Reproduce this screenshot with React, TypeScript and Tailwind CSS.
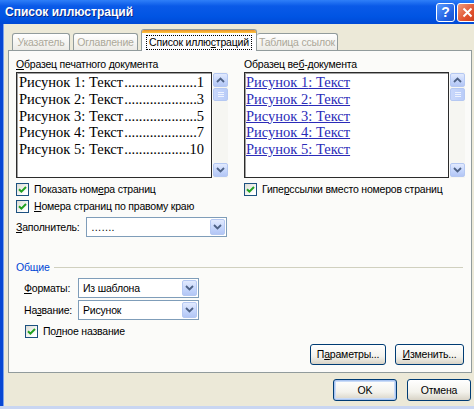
import React from 'react';

const ui = "font-['Liberation_Sans',Arial,sans-serif] text-[10.5px] leading-[13px] tracking-[-0.2px]";

function Check() {
  return (
    <span className="flex h-[13px] w-[13px] shrink-0 items-center justify-center border border-[#1C5180] bg-[linear-gradient(135deg,#dcdcd4,#ffffff_80%)]">
      <svg width="9" height="9" viewBox="0 0 9 9">
        <path d="M1 4.2 L3.4 6.6 L8 2" stroke="#21A121" strokeWidth="2" fill="none" />
      </svg>
    </span>
  );
}

function Arrow({ up }: { up?: boolean }) {
  return (
    <svg width="9" height="6" viewBox="0 0 9 6">
      <path d={up ? 'M1 5 L4.5 1.5 L8 5' : 'M1 1 L4.5 4.5 L8 1'} stroke="#4D6185" strokeWidth="1.8" fill="none" />
    </svg>
  );
}

function ArrowButton({ up, className = '' }: { up?: boolean; className?: string }) {
  return (
    <span
      className={`flex shrink-0 items-center justify-center rounded-[2px] border border-[#B5C8F2] bg-[linear-gradient(180deg,#e2eafe,#c3d4fb_60%,#b3c6f5)] ${className}`}
    >
      <Arrow up={up} />
    </span>
  );
}

function Scrollbar() {
  return (
    <div className="flex h-[106px] w-[15px] flex-col bg-[#F6F6F2] py-[1px]">
      <ArrowButton up className="h-[14px] w-[15px]" />
      <span className="mt-px flex h-[13px] w-[15px] flex-col items-center justify-center gap-[1px] rounded-[2px] border border-[#B5C8F2] bg-[linear-gradient(90deg,#c9d8fc,#b9ccf8)]">
        <span className="h-px w-[6px] bg-[#eef3ff]" />
        <span className="h-px w-[6px] bg-[#eef3ff]" />
        <span className="h-px w-[6px] bg-[#eef3ff]" />
      </span>
      <span className="flex-1" />
      <ArrowButton className="h-[14px] w-[15px]" />
    </div>
  );
}

function Combo({ value, className }: { value: string; className: string }) {
  return (
    <div className={`flex h-[20px] border border-[#7F9DB9] bg-white p-px ${className}`}>
      <span className="flex-1 whitespace-nowrap pl-[3px] leading-[16px]">{value}</span>
      <ArrowButton className="h-[16px] w-[15px]" />
    </div>
  );
}

function XpButton({ children, className, isDefault }: { children: React.ReactNode; className: string; isDefault?: boolean }) {
  return (
    <div
      className={`flex items-center justify-center whitespace-nowrap rounded-[3px] border border-[#003C74] bg-[linear-gradient(180deg,#ffffff,#f3f2ec_60%,#d8d3c6)] ${
        isDefault ? 'shadow-[inset_0_0_0_1px_#a9c4f0,inset_0_0_0_2px_#c9dbf7]' : ''
      } ${className}`}
    >
      {children}
    </div>
  );
}

// leader dots are counted so they end just before the page number
const printItems = [
  { n: 1, page: '1', dots: 20 },
  { n: 2, page: '3', dots: 20 },
  { n: 3, page: '5', dots: 20 },
  { n: 4, page: '7', dots: 20 },
  { n: 5, page: '10', dots: 18 },
];

export default function App() {
  return (
    <div className={`h-[409px] w-[474px] overflow-hidden bg-[#ECE9D8] text-black ${ui}`}>
      <div className="flex h-[409px] w-[482px] flex-col">
        {/* Title bar */}
        <div className="flex h-[24px] shrink-0 items-center bg-[linear-gradient(180deg,#2f7ff8_0%,#0a5ae8_25%,#0054e3_70%,#0049d6_100%)] pl-[5px] pr-[4px]">
          <span className="text-[12px] font-bold leading-[16px] tracking-normal text-white [text-shadow:1px_1px_0_#0a2a8a]">
            Список иллюстраций
          </span>
          <div className="ml-auto flex h-[19px] w-[19px] items-center justify-center rounded-[3px] border border-white bg-[linear-gradient(135deg,#5b9bff,#1f5fe0_70%,#1d52c8)] text-[14px] font-bold text-white">
            ?
          </div>
          <div className="ml-[2px] flex h-[19px] w-[21px] items-center justify-center rounded-[3px] border border-white bg-[linear-gradient(135deg,#f09a7c,#e0502d_60%,#c73d1c)]">
            <svg width="11" height="11" viewBox="0 0 11 11">
              <path d="M1.5 1.5 L9.5 9.5 M9.5 1.5 L1.5 9.5" stroke="#fff" strokeWidth="2" />
            </svg>
          </div>
        </div>

        <div className="flex min-h-0 flex-1">
          {/* left window frame */}
          <div className="w-[4px] shrink-0 bg-[linear-gradient(90deg,#0847d3_0,#0847d3_75%,#7aa2ee_75%)]" />

          <div className="flex flex-col pl-[4px]">
            {/* Tabs */}
            <div className="relative z-10 -mb-px flex h-[27px] items-end whitespace-nowrap pl-[4px]">
              <div className="mb-px flex h-[17px] w-[58px] items-center justify-center rounded-t-[3px] border border-b-0 border-[#919B9C] bg-[linear-gradient(180deg,#ffffff,#ecebe6)] text-[#ACA899]">
                Указатель
              </div>
              <div className="mb-px ml-[3px] flex h-[17px] w-[65px] items-center justify-center rounded-t-[3px] border border-b-0 border-[#919B9C] bg-[linear-gradient(180deg,#ffffff,#ecebe6)] text-[#ACA899]">
                Оглавление
              </div>
              <div className="ml-[3px] flex h-[22px] w-[116px] flex-col rounded-t-[3px] border border-b-0 border-[#919B9C] bg-[#FCFCFE]">
                <span className="h-[3px] rounded-t-[2px] bg-[linear-gradient(180deg,#e68b2c,#ffc73c)]" />
                <span className="flex flex-1 items-center justify-center">
                  <span className="border border-dotted border-black px-[2px] leading-[13px]">
                    Список иллю<u>с</u>траций
                  </span>
                </span>
              </div>
              <div className="mb-px flex h-[17px] w-[81px] items-center justify-center rounded-t-[3px] border border-b-0 border-l-0 border-[#919B9C] bg-[linear-gradient(180deg,#ffffff,#ecebe6)] text-[#ACA899]">
                Таблица ссылок
              </div>
            </div>

            {/* Panel */}
            <div className="flex h-[323px] w-[464px] flex-col border border-[#919B9C] bg-[#FBFBF9] px-[7px] pt-[7px]">
              <div className="flex items-start">
                {/* print preview */}
                <div className="flex w-[212px] flex-col">
                  <div>
                    <u>О</u>бразец печатного документа
                  </div>
                  <div className="mt-px flex gap-px">
                    <div className="h-[106px] w-[196px] border border-[#2b2b2b] bg-white pl-[2px] pr-[7px] pt-[1px] font-['Liberation_Serif',serif] text-[14.5px] leading-[16.75px] tracking-normal shadow-[inset_1px_1px_0_#a0a0a0]">
                      {printItems.map((it) => (
                        <div key={it.n} className="flex justify-between whitespace-nowrap">
                          <span>Рисунок {it.n}: Текст</span>
                          <span>
                            {'.'.repeat(it.dots)}
                            {it.page}
                          </span>
                        </div>
                      ))}
                    </div>
                    <Scrollbar />
                  </div>
                  <div className="mt-[3px] flex h-[17px] items-center gap-[5px] whitespace-nowrap">
                    <Check />
                    <span>
                      Показать ном<u>е</u>ра страниц
                    </span>
                  </div>
                  <div className="flex h-[17px] items-center gap-[5px] whitespace-nowrap">
                    <Check />
                    <span>
                      <u>Н</u>омера страниц по правому краю
                    </span>
                  </div>
                  <div className="mt-[2px] flex items-center">
                    <span className="w-[70px]">
                      <u>З</u>аполнитель:
                    </span>
                    <Combo value="……." className="w-[141px]" />
                  </div>
                </div>

                <div className="ml-[8px] -mt-px h-[197px] w-px bg-[#D0D0BF]" />

                {/* web preview */}
                <div className="ml-[8px] flex w-[221px] flex-col">
                  <div>
                    Образец ве<u>б</u>-документа
                  </div>
                  <div className="mt-px flex gap-px">
                    <div className="h-[106px] w-[205px] border border-[#2b2b2b] bg-white pl-[1px] pt-[1px] font-['Liberation_Serif',serif] text-[14.5px] leading-[16.75px] tracking-normal text-[#2B2BB8] shadow-[inset_1px_1px_0_#a0a0a0]">
                      {printItems.map((it) => (
                        <div key={it.n} className="whitespace-nowrap">
                          <span className="underline">Рисунок {it.n}: Текст</span>
                        </div>
                      ))}
                    </div>
                    <Scrollbar />
                  </div>
                  <div className="mt-[3px] flex h-[17px] items-center gap-[5px] whitespace-nowrap">
                    <Check />
                    <span>
                      Гипе<u>р</u>ссылки вместо номеров страниц
                    </span>
                  </div>
                </div>
              </div>

              {/* Общие */}
              <div className="mt-[6px] flex h-[14px] items-center">
                <span className="text-[#0046D5]">Общие</span>
                <span className="ml-[4px] mr-[1px] h-px flex-1 bg-[#D0D0BF]" />
              </div>
              <div className="mt-[4px] flex items-center pl-[8px]">
                <span className="w-[54px]">
                  <u>Ф</u>орматы:
                </span>
                <Combo value="Из шаблона" className="w-[121px]" />
              </div>
              <div className="mt-[2px] flex items-center pl-[8px]">
                <span className="w-[54px]">
                  На<u>з</u>вание:
                </span>
                <Combo value="Рисунок" className="w-[121px]" />
              </div>
              <div className="mt-[3px] flex h-[17px] items-center gap-[5px] pl-[9px]">
                <Check />
                <span>
                  По<u>л</u>ное название
                </span>
              </div>
              <div className="mt-[4px] flex justify-end gap-[9px]">
                <XpButton className="h-[21px] w-[76px]">
                  <span>
                    П<u>а</u>раметры...
                  </span>
                </XpButton>
                <XpButton className="h-[21px] w-[69px]">
                  <span>
                    <u>И</u>зменить...
                  </span>
                </XpButton>
              </div>
            </div>

            {/* OK / Cancel */}
            <div className="mt-[6px] flex w-[464px] justify-end gap-[10px] pr-[1px]">
              <XpButton isDefault className="h-[22px] w-[64px]">
                OK
              </XpButton>
              <XpButton className="h-[22px] w-[64px]">Отмена</XpButton>
            </div>
          </div>
        </div>
        <div className="h-[3px] shrink-0 bg-[#C9D6F2]" />
      </div>
    </div>
  );
}
